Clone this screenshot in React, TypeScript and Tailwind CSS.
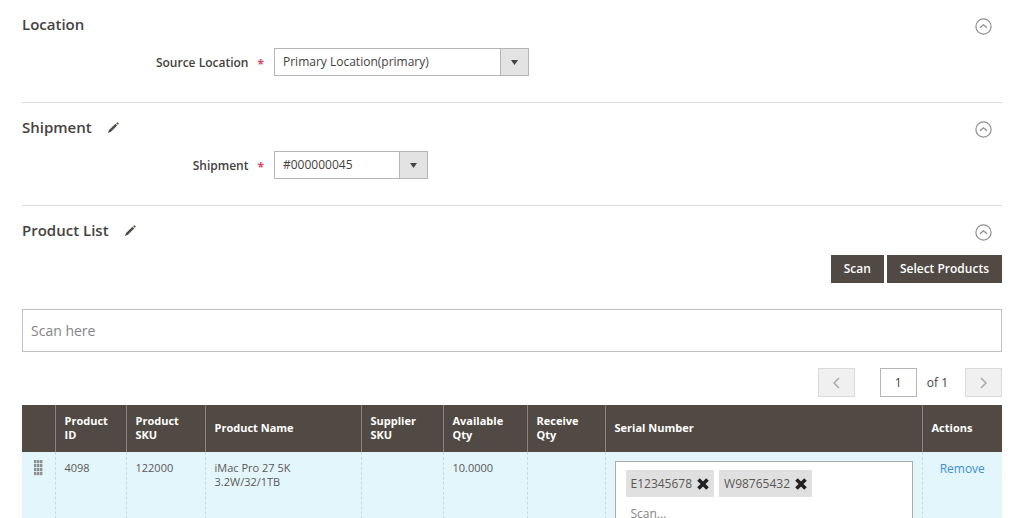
import { useState, type ReactNode } from "react";

type SectionProps = {
  title: string;
  editable?: boolean;
  children: ReactNode;
};

type SelectFieldProps = {
  id: string;
  label: string;
  options: string[];
  widthClass: string;
};

type Product = {
  id: string;
  sku: string;
  name: string;
  supplierSku: string;
  availableQty: string;
  receiveQty: string;
  serials: string[];
};

const products: Product[] = [
  {
    id: "4098",
    sku: "122000",
    name: "iMac Pro 27 5K 3.2W/32/1TB",
    supplierSku: "",
    availableQty: "10.0000",
    receiveQty: "",
    serials: ["E12345678", "W98765432"],
  },
];

const columns = [
  { label: "", width: "w-[33px]" },
  { label: "Product ID", width: "w-[71px]" },
  { label: "Product SKU", width: "w-[79px]" },
  { label: "Product Name", width: "w-[156px]" },
  { label: "Supplier SKU", width: "w-[82px]" },
  { label: "Available Qty", width: "w-[84px]" },
  { label: "Receive Qty", width: "w-[78px]" },
  { label: "Serial Number", width: "" },
  { label: "Actions", width: "w-[80px]" },
];

const cellClass =
  "border-r border-dashed border-[#c9d9dd] px-[9px] py-[9px] text-[11px] leading-[14px]";

export default function App() {
  return (
    <div className="h-screen overflow-hidden bg-white px-[22px] font-['Open_Sans',sans-serif] text-[#454240]">
      <Section title="Location">
        <SelectField
          id="source-location"
          label="Source Location"
          options={["Primary Location(primary)"]}
          widthClass="w-[255px]"
        />
      </Section>
      <Section title="Shipment" editable>
        <SelectField
          id="shipment"
          label="Shipment"
          options={["#000000045"]}
          widthClass="w-[154px]"
        />
      </Section>
      <Section title="Product List" editable>
        <div className="flex justify-end gap-[3px] pt-px">
          <ActionButton>Scan</ActionButton>
          <ActionButton>Select Products</ActionButton>
        </div>
        <input
          type="text"
          aria-label="Scan here"
          placeholder="Scan here"
          className="mt-[26px] block h-[43px] w-full border border-[#c2c2c2] px-2 text-sm placeholder:text-[#858585]"
        />
        <Pager />
        <ProductTable />
      </Section>
    </div>
  );
}

function Section({ title, editable, children }: SectionProps) {
  const [isOpen, setIsOpen] = useState(true);

  return (
    <section className="border-b border-[#dcdcdc] pb-[26px] last:border-b-0">
      <header className="flex h-12 items-center justify-between pr-[10px]">
        <div className="flex items-center gap-4">
          <h2 className="text-[15px] leading-5 font-semibold">{title}</h2>
          {editable && (
            <button type="button" aria-label={`Edit ${title}`}>
              <PencilIcon />
            </button>
          )}
        </div>
        <button
          type="button"
          aria-label={`Toggle ${title}`}
          aria-expanded={isOpen}
          onClick={() => setIsOpen(!isOpen)}
          className="pt-1"
        >
          <CollapseIcon />
        </button>
      </header>
      {isOpen && children}
    </section>
  );
}

function SelectField({ id, label, options, widthClass }: SelectFieldProps) {
  return (
    <div className="flex items-center">
      <label
        htmlFor={id}
        className="flex w-[252px] items-center justify-end gap-[9px] pt-[2px] pr-[10px] text-xs font-semibold"
      >
        {label}
        <span className="pt-1 text-xs leading-4 font-bold text-[#e0455a]">
          *
        </span>
      </label>
      <div className={`relative ${widthClass}`}>
        <select
          id={id}
          className="block h-[28px] w-full appearance-none border border-[#b5b5b5] bg-white pr-8 pl-2 text-xs"
        >
          {options.map((option) => (
            <option key={option}>{option}</option>
          ))}
        </select>
        <span className="pointer-events-none absolute inset-y-0 right-0 flex w-[29px] items-center justify-center border border-[#b5b5b5] bg-[#e3e3e3]">
          <svg width="7" height="5" viewBox="0 0 7 5" fill="#454240">
            <path d="M0 0h7L3.5 5z" />
          </svg>
        </span>
      </div>
    </div>
  );
}

function ActionButton({ children }: { children: ReactNode }) {
  return (
    <button
      type="button"
      className="h-7 bg-[#514943] px-[13px] text-xs font-semibold text-white hover:bg-[#41362f]"
    >
      {children}
    </button>
  );
}

function Pager() {
  return (
    <div className="mt-4 mb-2 flex items-center justify-end text-xs">
      <PagerButton label="Previous page" path="M6 1L1 6l5 5" />
      <input
        type="text"
        aria-label="Current page"
        defaultValue="1"
        className="ml-[25px] h-[29px] w-[37px] border border-[#b5b5b5] text-center"
      />
      <span className="mx-[10px] pr-[7px]">of 1</span>
      <PagerButton label="Next page" path="M1 1l5 5-5 5" />
    </div>
  );
}

function PagerButton({ label, path }: { label: string; path: string }) {
  return (
    <button
      type="button"
      aria-label={label}
      disabled
      className="flex h-[29px] w-[37px] items-center justify-center border border-[#dadada] bg-[#f0f0f0]"
    >
      <svg width="7" height="12" viewBox="0 0 7 12" fill="none" stroke="#a9a9a9">
        <path d={path} strokeWidth="1.5" />
      </svg>
    </button>
  );
}

function ProductTable() {
  return (
    <table className="w-full table-fixed border-collapse">
      <thead>
        <tr className="h-[47px] bg-[#514943] text-left text-[11px] leading-[14px] text-white">
          {columns.map(({ label, width }) => (
            <th
              key={label}
              scope="col"
              className={`border-r border-[#8a837f] px-[9px] pb-[2px] font-bold last:border-r-0 ${width}`}
            >
              {label}
            </th>
          ))}
        </tr>
      </thead>
      <tbody>
        {products.map((product) => (
          <tr key={product.id} className="bg-[#e3f6fc] align-top text-[#5a5856]">
            <td className="border-r border-dashed border-[#c9d9dd] pt-2">
              <DragHandle />
            </td>
            <td className={cellClass}>{product.id}</td>
            <td className={cellClass}>{product.sku}</td>
            <td className={cellClass}>
              <span className="block w-24">{product.name}</span>
            </td>
            <td className={cellClass}>{product.supplierSku}</td>
            <td className={cellClass}>{product.availableQty}</td>
            <td className={cellClass}>{product.receiveQty}</td>
            <td className={cellClass}>
              <SerialBox initialSerials={product.serials} />
            </td>
            <td className="pt-2 text-center text-xs leading-[18px]">
              <a href="#remove" className="text-[#3f8fd6] hover:underline">
                Remove
              </a>
            </td>
          </tr>
        ))}
      </tbody>
    </table>
  );
}

function SerialBox({ initialSerials }: { initialSerials: string[] }) {
  const [serials, setSerials] = useState(initialSerials);

  return (
    <div className="border border-[#adadad] bg-white px-[10px] pt-2 pb-4">
      <ul className="flex flex-wrap gap-[5px]">
        {serials.map((serial) => (
          <li
            key={serial}
            className="flex h-[27px] items-center gap-[5px] bg-[#e0e0e0] px-[5px] text-xs"
          >
            {serial}
            <button
              type="button"
              aria-label={`Remove ${serial}`}
              onClick={() => setSerials(serials.filter((s) => s !== serial))}
            >
              <CrossIcon />
            </button>
          </li>
        ))}
      </ul>
      <input
        type="text"
        aria-label="Scan serial number"
        placeholder="Scan..."
        className="mt-[6px] block h-5 w-full px-[5px] text-xs placeholder:text-[#858585]"
      />
    </div>
  );
}

function PencilIcon() {
  return (
    <svg width="11" height="11" viewBox="0 0 11 11" fill="#514943">
      <path d="M0 11l1-3L7.5 1.8l1.7 1.7-6.3 6.2z" />
      <path d="M8.2 1.2L9 .4q.4-.4.8 0l.8.8q.4.4 0 .8l-.8.8z" />
    </svg>
  );
}

function CollapseIcon() {
  return (
    <svg width="17" height="17" viewBox="0 0 17 17" fill="none" stroke="#8f8f8f">
      <circle cx="8.5" cy="8.5" r="7.6" strokeWidth="1.2" />
      <path d="M5 9.8l3.5-3 3.5 3" strokeWidth="1.4" />
    </svg>
  );
}

function CrossIcon() {
  return (
    <svg width="12" height="12" viewBox="0 0 12 12" stroke="#222222">
      <path d="M1.5 1.5l9 9M10.5 1.5l-9 9" strokeWidth="3.6" />
    </svg>
  );
}

function DragHandle() {
  return (
    <svg
      width="9"
      height="16"
      viewBox="0 0 9 16"
      fill="#8b8f90"
      className="mx-auto block"
    >
      {[0, 4, 8, 12].map((y) =>
        [0, 3, 6].map((x) => (
          <rect key={`${x}-${y}`} x={x} y={y} width="2.4" height="3.2" />
        ))
      )}
    </svg>
  );
}
